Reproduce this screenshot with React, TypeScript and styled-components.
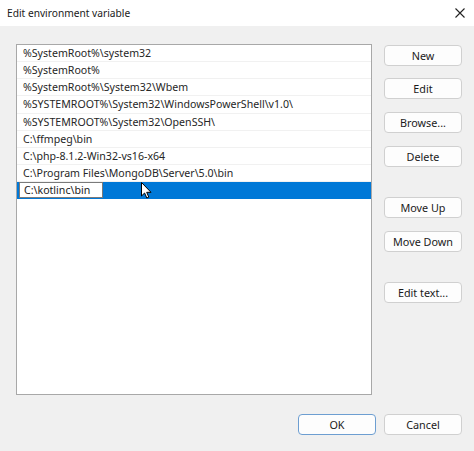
import React from 'react'
import styled, { createGlobalStyle } from 'styled-components'

const GlobalStyle = createGlobalStyle`
  html, body {
    margin: 0;
    padding: 0;
    background: #f0f0f0;
  }
  body {
    font-family: "Noto Sans", "Open Sans", sans-serif;
    font-size: 10.6px;
    color: #1a1a1a;
  }
`

const Window = styled.div`
  position: relative;
  width: 474px;
  height: 451px;
  display: flex;
  flex-direction: column;
  background: #f0f0f0;
  overflow: hidden;
`

const TitleBar = styled.div`
  height: 26px;
  flex: none;
  background: #ffffff;
  display: flex;
  align-items: center;
  justify-content: space-between;
  padding: 0 8px 0 7px;
`

const Title = styled.span`
  font-size: 10.2px;
  color: #1a1a1a;
`

const CloseIcon = styled.svg`
  width: 10px;
  height: 10px;
  margin-right: 1px;
`

const Body = styled.div`
  flex: 1;
  display: flex;
  flex-direction: column;
  padding: 18px 12px 0 16px;
`

const Main = styled.div`
  display: flex;
  gap: 12px;
`

const ListBox = styled.div`
  width: 356px;
  height: 351px;
  box-sizing: border-box;
  background: #ffffff;
  border: 1px solid #a8a8a8;
`

const Row = styled.div<{ $selected?: boolean }>`
  position: relative;
  height: 17.15px;
  box-sizing: border-box;
  display: flex;
  align-items: center;
  padding-left: 6px;
  background: ${p => (p.$selected ? '#0078d7' : 'transparent')};
  border-bottom: 1px solid ${p => (p.$selected ? '#0078d7' : '#f1f1f1')};
  white-space: nowrap;
  color: #262626;
`

const EditField = styled.div`
  align-self: stretch;
  width: 84px;
  margin-left: -4px;
  box-sizing: border-box;
  background: #ffffff;
  border: 1px solid #7a7a7a;
  display: flex;
  align-items: center;
  padding-left: 4px;
  color: #1a1a1a;
`

const ButtonColumn = styled.div`
  display: flex;
  flex-direction: column;
  padding-top: 1px;
`

const Button = styled.button<{ $gap?: number; $primary?: boolean }>`
  width: 78px;
  height: 21px;
  margin-top: ${p => p.$gap ?? 0}px;
  box-sizing: border-box;
  background: #fdfdfd;
  border: 1px solid ${p => (p.$primary ? '#6d9ed1' : '#d0d0d0')};
  border-radius: 4px;
  font-family: inherit;
  font-size: 10.8px;
  color: #1a1a1a;
  padding: 0;
  display: flex;
  align-items: center;
  justify-content: center;
`

const Footer = styled.div`
  display: flex;
  justify-content: flex-end;
  gap: 8px;
  margin-top: 19px;
`

const Cursor = styled.svg`
  position: absolute;
  left: 141px;
  top: 182px;
  width: 11px;
  height: 17px;
`

const paths = [
  '%SystemRoot%\\system32',
  '%SystemRoot%',
  '%SystemRoot%\\System32\\Wbem',
  '%SYSTEMROOT%\\System32\\WindowsPowerShell\\v1.0\\',
  '%SYSTEMROOT%\\System32\\OpenSSH\\',
  'C:\\ffmpeg\\bin',
  'C:\\php-8.1.2-Win32-vs16-x64',
  'C:\\Program Files\\MongoDB\\Server\\5.0\\bin',
]

const App: React.FC = () => {
  return (
    <>
      <GlobalStyle />
      <Window>
        <TitleBar>
          <Title>Edit environment variable</Title>
          <CloseIcon viewBox="0 0 10 10">
            <path d="M0.5 0.5 L9.5 9.5 M9.5 0.5 L0.5 9.5" stroke="#222" strokeWidth="1.1" />
          </CloseIcon>
        </TitleBar>
        <Body>
          <Main>
            <ListBox>
              {paths.map(p => (
                <Row key={p}>{p}</Row>
              ))}
              <Row $selected>
                <EditField>C:\kotlinc\bin</EditField>
              </Row>
            </ListBox>
            <ButtonColumn>
              <Button>New</Button>
              <Button $gap={12}>Edit</Button>
              <Button $gap={13}>Browse...</Button>
              <Button $gap={13}>Delete</Button>
              <Button $gap={30}>Move Up</Button>
              <Button $gap={13}>Move Down</Button>
              <Button $gap={30}>Edit text...</Button>
            </ButtonColumn>
          </Main>
          <Footer>
            <Button $primary>OK</Button>
            <Button>Cancel</Button>
          </Footer>
        </Body>
        <Cursor viewBox="0 0 11 17">
          <path d="M0.5 0.5 L0.5 14 L3.6 11 L5.8 16 L7.8 15.1 L5.7 10.3 L10 10.3 Z" fill="#ffffff" stroke="#000" strokeWidth="1" strokeLinejoin="round" />
        </Cursor>
      </Window>
    </>
  )
}

export default App
